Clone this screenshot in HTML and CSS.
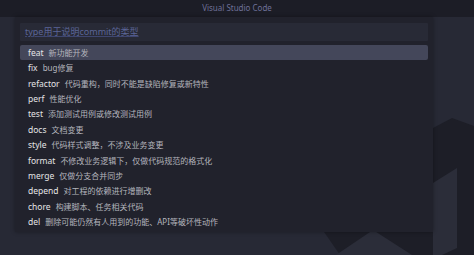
FILE: index.html
```html
<!DOCTYPE html>
<html lang="en">
<head>
    <meta charset="UTF-8">
    <title>Visual Studio Code</title>
    <link rel="stylesheet" href="styles.css">
</head>
<body>
    <div class="titlebar">Visual Studio Code</div>
    <div class="workbench">
        <svg class="watermark" width="474" height="238" viewBox="0 0 474 238">
            <polygon class="dark" points="433,111 452,101 474,109 474,238 433,238"/>
            <polygon class="light" points="433,166 457,151 457,231 442,238 433,238"/>
            <polygon class="dark" points="322,212 433,212 433,238 340,238"/>
            <polygon class="light" points="373,213 412,238 336,238"/>
        </svg>
        <div class="quickpick">
            <div class="input"><span>type用于说明commit的类型</span></div>
            <ul class="list">
                <li class="item selected"><span class="label">feat</span><span class="desc">新功能开发</span></li>
                <li class="item"><span class="label">fix</span><span class="desc">bug修复</span></li>
                <li class="item"><span class="label">refactor</span><span class="desc">代码重构，同时不能是缺陷修复或新特性</span></li>
                <li class="item"><span class="label">perf</span><span class="desc">性能优化</span></li>
                <li class="item"><span class="label">test</span><span class="desc">添加测试用例或修改测试用例</span></li>
                <li class="item"><span class="label">docs</span><span class="desc">文档变更</span></li>
                <li class="item"><span class="label">style</span><span class="desc">代码样式调整，不涉及业务变更</span></li>
                <li class="item"><span class="label">format</span><span class="desc">不修改业务逻辑下，仅做代码规范的格式化</span></li>
                <li class="item"><span class="label">merge</span><span class="desc">仅做分支合并同步</span></li>
                <li class="item"><span class="label">depend</span><span class="desc">对工程的依赖进行增删改</span></li>
                <li class="item"><span class="label">chore</span><span class="desc">构建脚本、任务相关代码</span></li>
                <li class="item"><span class="label">del</span><span class="desc">删除可能仍然有人用到的功能、API等破坏性动作</span></li>
            </ul>
        </div>
    </div>
</body>
</html>
```

FILE: styles.css
```css
body {
    margin: 0;
    width: 474px;
    height: 255px;
    overflow: hidden;
    background-color: #272935;
    font-family: "Noto Sans", "Noto Sans CJK SC", sans-serif;
}

.titlebar {
    height: 17px;
    line-height: 16px;
    background-color: #1c1d26;
    color: #6e7098;
    font-size: 8px;
    text-align: center;
}

.workbench {
    position: relative;
    height: 238px;
}

.watermark {
    position: absolute;
    left: 0;
    top: 0;
}

.watermark .dark {
    fill: #1d1e27;
}

.watermark .light {
    fill: #2b2d39;
}

.quickpick {
    position: relative;
    margin-left: 15px;
    width: 418px;
    height: 215px;
    background-color: #21222c;
    box-shadow: 0 0 4px rgba(0, 0, 0, 0.35);
    box-sizing: border-box;
    padding: 6px 5px 0 5px;
}

.input {
    height: 18px;
    background-color: #282a36;
    border-radius: 1px;
    padding-left: 5px;
    font-size: 9px;
    line-height: 18px;
    color: #5b6597;
}

.input span {
    text-decoration: underline;
    text-decoration-color: #3f4670;
}

.list {
    list-style: none;
    margin: 4px 0 0 0;
    padding: 0;
}

.item {
    height: 15.36px;
    line-height: 15.36px;
    padding-left: 8px;
    display: flex;
    gap: 5px;
    white-space: nowrap;
}

.item.selected {
    background-color: #44475a;
    border-radius: 2px;
}

.label {
    font-size: 8.5px;
    color: #e4e4e6;
}

.desc {
    font-size: 8px;
    color: #b4b5bd;
}
```
